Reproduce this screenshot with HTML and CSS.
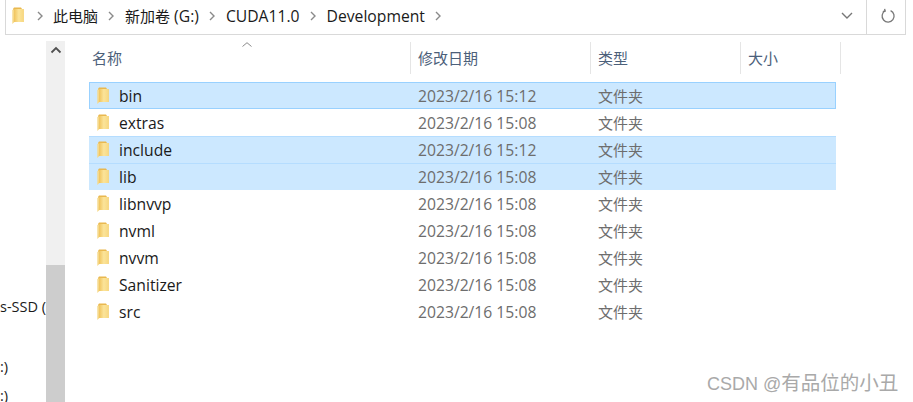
FILE: index.html
```html
<!DOCTYPE html>
<html lang="zh-CN">
<head>
<meta charset="utf-8">
<title>Development</title>
<link rel="stylesheet" href="styles.css">
</head>
<body>
<svg class="defs" width="0" height="0" aria-hidden="true">
  <defs>
    <linearGradient id="fg" x1="0" y1="0" x2="1" y2="0">
      <stop offset="0" stop-color="#f0c25a"/>
      <stop offset="0.5" stop-color="#fbe49a"/>
      <stop offset="1" stop-color="#f7d77f"/>
    </linearGradient>
    <symbol id="folder" viewBox="0 0 12 17">
      <path d="M1 2 L2 0.5 H9 L10 2 H11.5 V15 H1 Z" fill="#e9b84f"/>
      <path d="M0.3 17 V3 L2.5 2 V15 Z" fill="#f6d98a"/>
      <path d="M2.5 2 H11.8 V15 H1.8 Z" fill="url(#fg)"/>
    </symbol>
  </defs>
</svg>

<header class="address">
  <svg class="folder crumb-folder"><use href="#folder"/></svg>
  <svg class="chev first" viewBox="0 0 6 10"><path d="M1 1 L5 5 L1 9"/></svg>
  <span class="crumb cjk">此电脑</span>
  <svg class="chev" viewBox="0 0 6 10"><path d="M1 1 L5 5 L1 9"/></svg>
  <span class="crumb"><span class="cjk">新加卷</span> (G:)</span>
  <svg class="chev" viewBox="0 0 6 10"><path d="M1 1 L5 5 L1 9"/></svg>
  <span class="crumb">CUDA11.0</span>
  <svg class="chev" viewBox="0 0 6 10"><path d="M1 1 L5 5 L1 9"/></svg>
  <span class="crumb">Development</span>
  <svg class="chev" viewBox="0 0 6 10"><path d="M1 1 L5 5 L1 9"/></svg>
  <span class="spacer"></span>
  <svg class="down" viewBox="0 0 12 7"><path d="M1 1 L6 6 L11 1"/></svg>
  <span class="refresh">
    <svg viewBox="0 0 16 16"><path d="M5.2 2.8 A6 6 0 1 0 10.6 2.6"/><path d="M4.6 0.8 L5.2 3 L2.8 3.6"/></svg>
  </span>
</header>

<main class="main">
  <nav class="side">
    <div class="side-item first">s-SSD (</div>
    <div class="side-item second">:)</div>
    <div class="side-item third">:)</div>
  </nav>
  <div class="scrollbar">
    <div class="track">
      <svg class="up" viewBox="0 0 12 8"><path d="M1.5 6.5 L6 2 L10.5 6.5"/></svg>
    </div>
    <div class="thumb"></div>
  </div>
  <section class="list">
    <div class="head">
      <div class="col c-name">名称
        <svg class="sort" viewBox="0 0 10 5"><path d="M0.5 4.5 L5 0.7 L9.5 4.5"/></svg>
      </div>
      <div class="col c-date">修改日期</div>
      <div class="col c-type">类型</div>
      <div class="col c-size">大小</div>
    </div>
    <div class="rows">
      <div class="row sel"><svg class="folder"><use href="#folder"/></svg><span class="n">bin</span><span class="d">2023/2/16 15:12</span><span class="t">文件夹</span></div>
      <div class="row"><svg class="folder"><use href="#folder"/></svg><span class="n">extras</span><span class="d">2023/2/16 15:08</span><span class="t">文件夹</span></div>
      <div class="row sel plain"><svg class="folder"><use href="#folder"/></svg><span class="n">include</span><span class="d">2023/2/16 15:12</span><span class="t">文件夹</span></div>
      <div class="row sel plain"><svg class="folder"><use href="#folder"/></svg><span class="n">lib</span><span class="d">2023/2/16 15:08</span><span class="t">文件夹</span></div>
      <div class="row"><svg class="folder"><use href="#folder"/></svg><span class="n">libnvvp</span><span class="d">2023/2/16 15:08</span><span class="t">文件夹</span></div>
      <div class="row"><svg class="folder"><use href="#folder"/></svg><span class="n">nvml</span><span class="d">2023/2/16 15:08</span><span class="t">文件夹</span></div>
      <div class="row"><svg class="folder"><use href="#folder"/></svg><span class="n">nvvm</span><span class="d">2023/2/16 15:08</span><span class="t">文件夹</span></div>
      <div class="row"><svg class="folder"><use href="#folder"/></svg><span class="n">Sanitizer</span><span class="d">2023/2/16 15:08</span><span class="t">文件夹</span></div>
      <div class="row"><svg class="folder"><use href="#folder"/></svg><span class="n">src</span><span class="d">2023/2/16 15:08</span><span class="t">文件夹</span></div>
    </div>
  </section>
</main>
<div class="watermark">CSDN @<span class="wm-cjk">有品位的小丑</span></div>
</body>
</html>
```

FILE: styles.css
```css
* { box-sizing: border-box; }
html, body { margin: 0; height: 100%; }
body {
  width: 913px;
  height: 402px;
  overflow: hidden;
  background: #fff;
  color: #1a1a1a;
  font: 15.7px/20px "Open Sans", "Noto Sans CJK SC", sans-serif;
  position: relative;
}
.defs { position: absolute; }
.cjk { font-size: 15px; }

.address {
  display: flex;
  align-items: center;
  height: 35px;
  margin: 0 7px 0 5px;
  border: 1px solid #d9d9d9;
  border-top: 0;
  padding: 0 0 3px 6px;
}
.folder { width: 12px; height: 17px; flex: none; }
.chev {
  width: 6px;
  height: 10px;
  margin: 0 11px 0 10px;
  flex: none;
  fill: none;
  stroke: #8a8a8a;
  stroke-width: 1.4;
}
.chev.first { margin: 0 10px 0 13px; }
.crumb { white-space: nowrap; }
.spacer { flex: 1; }
.down {
  width: 12px;
  height: 7px;
  margin-right: 13px;
  fill: none;
  stroke: #777;
  stroke-width: 1.4;
}
.refresh {
  display: flex;
  align-items: center;
  justify-content: center;
  width: 39px;
  height: 35px;
  margin-bottom: -3px;
  padding: 0 0 3px 3px;
  border-left: 1px solid #d9d9d9;
}
.refresh svg {
  width: 16px;
  height: 16px;
  fill: none;
  stroke: #777;
  stroke-width: 1.3;
}

.main { display: flex; height: 367px; }
.side { width: 46px; flex: none; overflow: hidden; padding-top: 262px; font-size: 14.5px; }
.side-item { white-space: nowrap; height: 20px; }
.side-item.second { margin-top: 40px; }
.side-item.third { margin-top: 9px; }

.scrollbar {
  width: 19px;
  flex: none;
  display: flex;
  flex-direction: column;
  margin-top: 6px;
}
.track { height: 224px; background: #f0f0f0; display: flex; justify-content: center; padding-top: 5px; }
.up { width: 12px; height: 8px; fill: none; stroke: #505050; stroke-width: 1.8; }
.thumb { flex: 1; background: #cdcdcd; }

.list { flex: 1; padding: 7px 0 0 24px; min-width: 0; }
.head { display: flex; height: 32px; color: #4c607a; font-size: 15px; }
.col {
  padding: 6px 0 0 7px;
  border-right: 1px solid #e5e5e5;
  flex: none;
  position: relative;
}
.c-name { width: 322px; padding-left: 3px; }
.c-date { width: 180px; }
.c-type { width: 150px; }
.c-size { width: 100px; }
.sort {
  position: absolute;
  left: 153px;
  top: 0;
  width: 10px;
  height: 5px;
  fill: none;
  stroke: #8a8a8a;
  stroke-width: 1;
}

.rows { margin-top: 8px; width: 747px; }
.row {
  display: flex;
  align-items: center;
  height: 27px;
  padding-left: 8px;
}
.sel { background: #cce8ff; box-shadow: inset 0 0 0 1px #99d1ff; }
.sel.plain { box-shadow: inset 0 1px 0 #b5ddff; }
.n { width: 309px; padding-left: 10px; }
.d { width: 180px; color: #6d6d6d; }
.t { color: #6d6d6d; font-size: 15px; }

.watermark {
  position: absolute;
  left: 707px;
  top: 372px;
  font: 18px/22px "Liberation Sans", "Noto Sans CJK SC", sans-serif;
  color: #a9a9a9;
  white-space: nowrap;
}
.wm-cjk { font-size: 19.5px; }
```
